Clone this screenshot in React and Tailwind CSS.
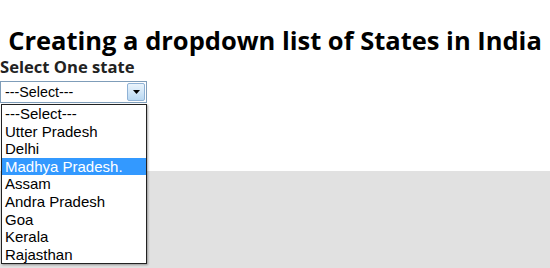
import React from "react";

const states = [
  "---Select---",
  "Utter Pradesh",
  "Delhi",
  "Madhya Pradesh.",
  "Assam",
  "Andra Pradesh",
  "Goa",
  "Kerala",
  "Rajasthan",
];

const App = () => {
  const selected = 3;

  return (
    <div className="relative w-[550px] h-[268px] flex flex-col bg-[#e1e1e1] overflow-hidden">
      <section className="h-[171px] bg-white">
        <h1 className="pt-[25px] text-center whitespace-nowrap text-[25.5px] leading-[30px] font-bold text-black font-['Open_Sans',sans-serif]">
          Creating a dropdown list of States in India
        </h1>
        <p className="mt-[2px] text-[16.6px] leading-[20px] font-bold text-[#222] font-['Open_Sans',sans-serif]">
          Select One state
        </p>
        <div className="relative w-[147px] mt-[4px]">
          {/* closed select box */}
          <div className="flex items-center h-[22px] border border-[#7f9db9] bg-white">
            <span className="flex-1 pl-[4px] text-[14.3px] leading-[20px] text-black font-['Liberation_Sans',Arial,sans-serif]">
              ---Select---
            </span>
            <span className="flex items-center justify-center w-[18px] h-[18px] mr-[1px] border border-[#8fb2d6] rounded-[2px] bg-gradient-to-b from-[#eaf4fc] to-[#b9d8f2]">
              <svg width="7" height="4" viewBox="0 0 7 4">
                <path d="M0 0h7L3.5 4z" fill="#000" />
              </svg>
            </span>
          </div>

          {/* open options list */}
          <ul className="absolute left-[1px] top-[23px] w-[146px] border border-[#222] bg-white shadow-[1px_1px_2px_rgba(0,0,0,0.35)] z-10 font-['Liberation_Sans',Arial,sans-serif] text-[15px] leading-[17.6px]">
            {states.map((name, i) => (
              <li
                key={name}
                className={
                  i === selected
                    ? "pl-[3px] bg-[#3399ff] text-white"
                    : "pl-[3px] text-black"
                }
              >
                {name}
              </li>
            ))}
          </ul>
        </div>
      </section>
      <div className="flex-1" />
    </div>
  );
};

export default App;
